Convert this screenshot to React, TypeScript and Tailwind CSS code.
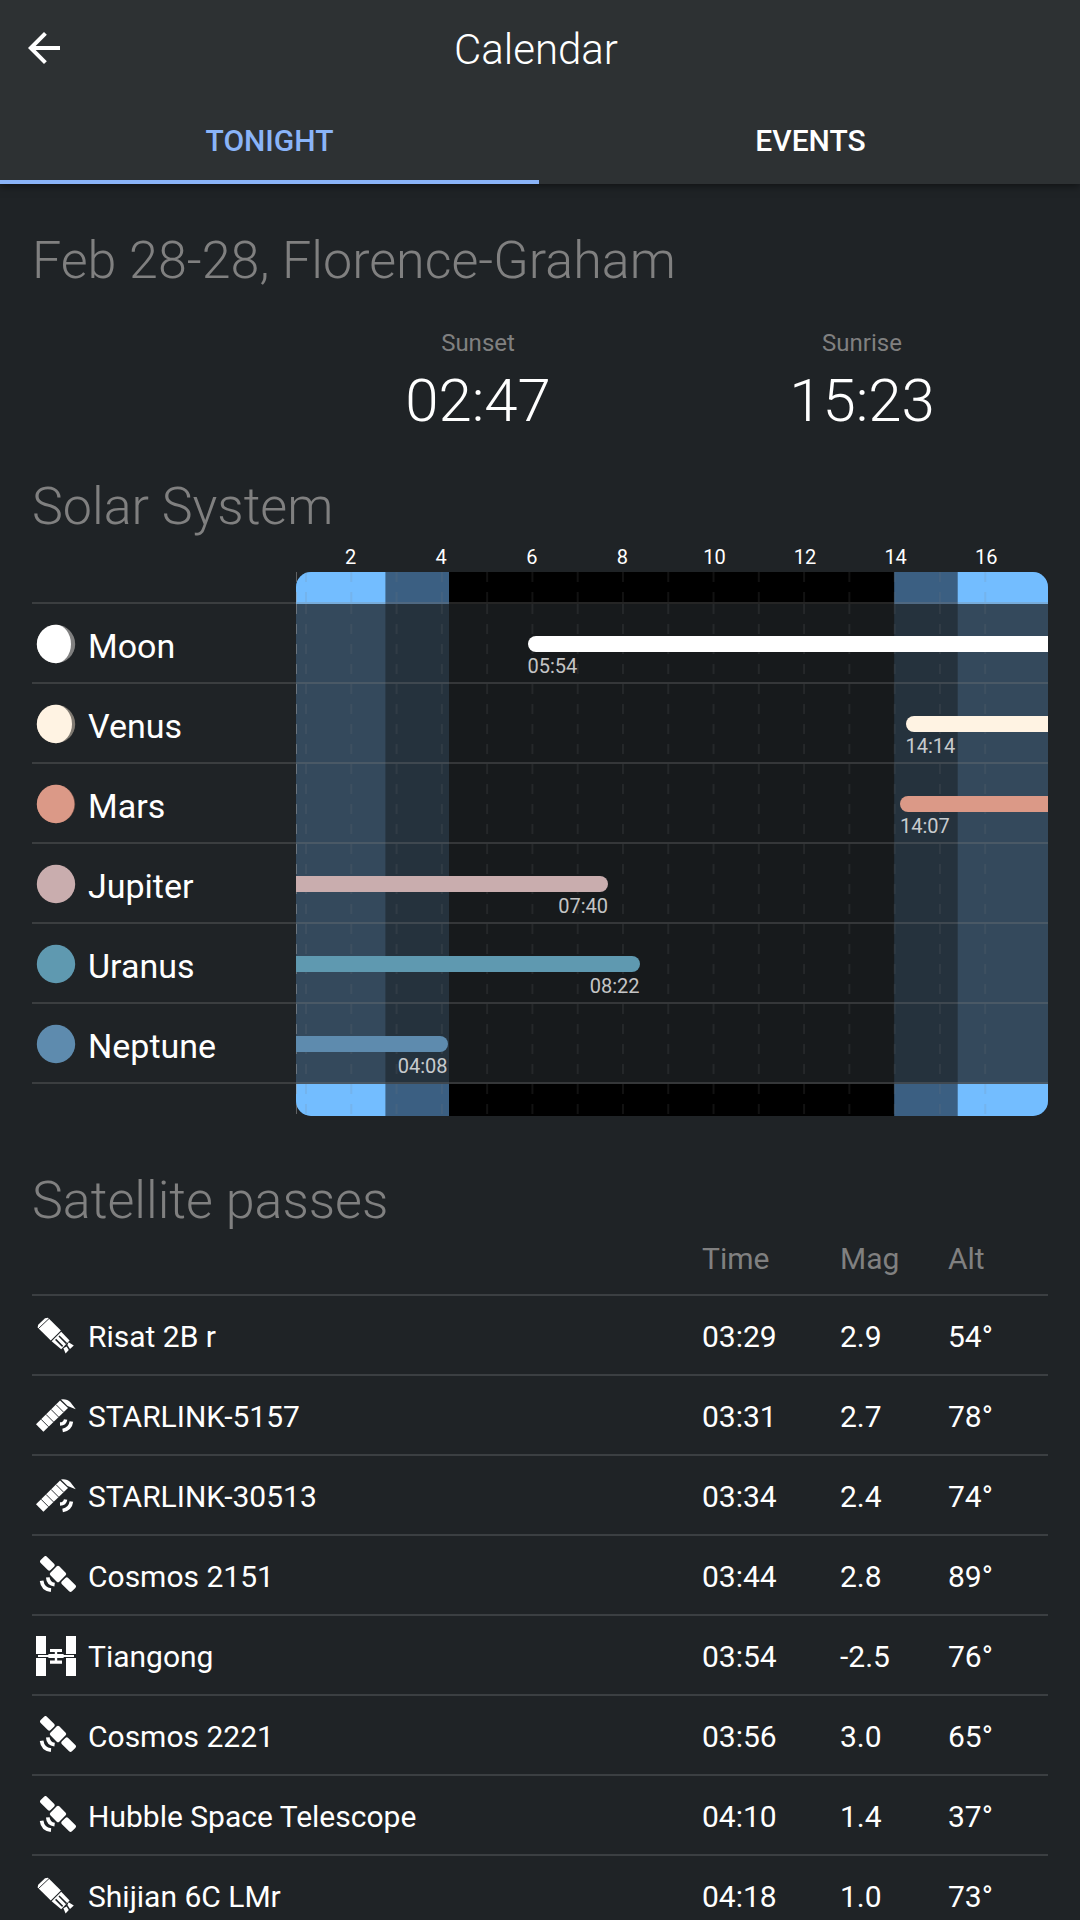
import type { ReactNode } from "react";

type Planet = {
  name: string;
  color: string;
  shade?: string;
  terminator?: number;
  start?: number;
  end?: number;
  label: string;
};

const CHART_W = 752;
const CHART_H = 544;

const hourX = (h: number) => 10 + (h - 1) * 45.28;

const planets: Planet[] = [
  { name: "Moon", color: "#ffffff", shade: "#808080", terminator: 15, start: 231.5, label: "05:54" },
  { name: "Venus", color: "#fff3e3", shade: "#807a72", terminator: 16, start: 609.5, label: "14:14" },
  { name: "Mars", color: "#db9987", shade: "#6e4d44", terminator: 18.4, start: 604, label: "14:07" },
  { name: "Jupiter", color: "#c9adae", end: 312, label: "07:40" },
  { name: "Uranus", color: "#5f99b0", end: 343.5, label: "08:22" },
  { name: "Neptune", color: "#5e8bae", end: 151.6, label: "04:08" },
];

type IconKind = "rocket" | "starlink" | "satellite" | "station";

const passes: { icon: IconKind; name: string; time: string; mag: string; alt: string }[] = [
  { icon: "rocket", name: "Risat 2B r", time: "03:29", mag: "2.9", alt: "54°" },
  { icon: "starlink", name: "STARLINK-5157", time: "03:31", mag: "2.7", alt: "78°" },
  { icon: "starlink", name: "STARLINK-30513", time: "03:34", mag: "2.4", alt: "74°" },
  { icon: "satellite", name: "Cosmos 2151", time: "03:44", mag: "2.8", alt: "89°" },
  { icon: "station", name: "Tiangong", time: "03:54", mag: "-2.5", alt: "76°" },
  { icon: "satellite", name: "Cosmos 2221", time: "03:56", mag: "3.0", alt: "65°" },
  { icon: "satellite", name: "Hubble Space Telescope", time: "04:10", mag: "1.4", alt: "37°" },
  { icon: "rocket", name: "Shijian 6C LMr", time: "04:18", mag: "1.0", alt: "73°" },
];

const icons: Record<IconKind, ReactNode> = {
  rocket: (
    <>
      <path d="M1.6 11.5 L2.2 8.8 L9 2.2 L12 1.8 L24.9 14.6 L14.8 24.6 Z" fill="#fff" />
      <path d="M2.4 12.6 L13 2.6" stroke="#1f2326" strokeWidth="0.9" />
      <path d="M15.6 25.2 L25.2 15.8 L33.6 24.6 L25.2 33.2 Z" fill="#fff" />
      <path d="M19.6 23.4 L26.6 30.4 M23 20 L30.6 27.6" stroke="#1f2326" strokeWidth="1.5" />
      <path d="M32.6 26.2 L37.8 29.4 L34 33 L31.4 29 Z M30.6 30.6 L32.8 34 L29.6 37.6 L27.4 32.2 Z" fill="#fff" />
    </>
  ),
  starlink: (
    <>
      <path d="M0 28.2 L24 4.4 L32 12 L7.4 35.8 Z" fill="#fff" />
      <path d="M5 23.2 L12.6 30.8 M10 18.4 L17.6 26 M15 13.4 L22.6 21 M20 8.6 L27.6 16.2" stroke="#1f2326" strokeWidth="0.9" />
      <path d="M25 3.4 Q31 2.6 34.6 6.6 L39.8 13.2 L31.6 10 Z" fill="#fff" />
      <path d="M29.6 23.4 Q29 27.8 24 28" stroke="#fff" strokeWidth="3.4" fill="none" />
      <path d="M35.4 25.4 Q34.4 33 26.6 34.4" stroke="#fff" strokeWidth="3.6" fill="none" />
    </>
  ),
  satellite: (
    <>
      <g transform="rotate(45 22 18)" fill="#fff">
        <rect x="-0.1" y="13.6" width="14.1" height="8.8" rx="2" />
        <rect x="15.7" y="11.7" width="12.6" height="12.6" rx="1.8" />
        <rect x="30" y="13.6" width="14.1" height="8.8" rx="2" />
      </g>
      <path d="M11.8 21.4 Q12.2 27.8 18.6 28.6" stroke="#fff" strokeWidth="3.7" fill="none" />
      <path d="M5.6 24.8 Q6.6 33.2 15 34.2" stroke="#fff" strokeWidth="3.7" fill="none" />
    </>
  ),
  station: (
    <g fill="#fff">
      <path d="M0 0H10V18H0Z M30 0H40V18H30Z M0 22H10V40H0Z M30 22H40V40H30Z" />
      <path d="M2 19H38V21H2Z M14 13H26V16H14Z M14 24.6H26V27.8H14Z M18.8 15H21.2V26H18.8Z" />
      <rect x="12" y="17.9" width="16" height="4.2" rx="1.4" />
    </g>
  ),
};

function Icon({ kind }: { kind: IconKind }) {
  return (
    <svg className="h-10 w-10 shrink-0" viewBox="0 0 40 40" fill="none">
      {icons[kind]}
    </svg>
  );
}

function Disc({ p }: { p: Planet }) {
  const r = 19.2;
  return (
    <svg className="h-10 w-10 shrink-0" viewBox="-20 -20 40 40">
      <circle r={r} fill={p.shade ?? p.color} />
      {p.terminator !== undefined && (
        <path
          d={`M0 ${-r} A${r} ${r} 0 0 0 0 ${r} A${p.terminator} ${r} 0 0 0 0 ${-r} Z`}
          fill={p.color}
        />
      )}
    </svg>
  );
}

function SkyBackground() {
  const segments = [0, 32, 112, 192, 272, 352, 432, 512];
  const hours = Array.from({ length: 16 }, (_, i) => i + 1);
  return (
    <svg
      className="absolute top-0 right-0 h-[544px] w-[752px]"
      viewBox={`0 0 ${CHART_W} ${CHART_H}`}
    >
      <defs>
        <clipPath id="sky">
          <rect width={CHART_W} height={CHART_H} rx="15" />
        </clipPath>
      </defs>
      <g clipPath="url(#sky)">
        <rect width={CHART_W} height={CHART_H} fill="#000" />
        <rect width="153" height={CHART_H} fill="#3b5f82" />
        <rect width="89.4" height={CHART_H} fill="#73bdff" />
        <rect x="598.2" width="153.8" height={CHART_H} fill="#3b5f82" />
        <rect x="661.7" width="90.3" height={CHART_H} fill="#73bdff" />
        <rect y="32" width={CHART_W} height="480" fill="#1f2326" fillOpacity="0.75" />
      </g>
      {segments.map((y) => (
        <g key={y}>
          {hours.map((h) => (
            <line
              key={h}
              x1={hourX(h)}
              x2={hourX(h)}
              y1={y}
              y2={y === 0 || y === 512 ? y + 30 : y + 78}
              stroke="#808080"
              strokeOpacity="0.14"
              strokeWidth="2"
              strokeDasharray="10 10"
            />
          ))}
          <line
            x1="0.5"
            x2="0.5"
            y1={y}
            y2={y === 0 || y === 512 ? y + 30 : y + 78}
            stroke="#a0a0a0"
            strokeOpacity="0.5"
            strokeWidth="1"
            strokeDasharray="10 10"
          />
        </g>
      ))}
    </svg>
  );
}

function PlanetRow({ p }: { p: Planet }) {
  const rising = p.start !== undefined;
  return (
    <div className="flex h-20 border-b-2 border-[#80808049]">
      <div className="flex w-[264px] items-center gap-3 pt-0.5 pl-1">
        <Disc p={p} />
        <span className="pt-[3px] text-[34px] leading-9 text-white">{p.name}</span>
      </div>
      {rising ? (
        <div className="flex-1 pt-8" style={{ paddingLeft: p.start }}>
          <div className="h-4 rounded-l-full" style={{ backgroundColor: p.color }} />
          <div className="mt-1 text-[20px] leading-5 text-white/75">{p.label}</div>
        </div>
      ) : (
        <div className="pt-8" style={{ width: p.end }}>
          <div className="h-4 rounded-r-full" style={{ backgroundColor: p.color }} />
          <div className="mt-1 text-right text-[20px] leading-5 text-white/75">{p.label}</div>
        </div>
      )}
    </div>
  );
}

export default function App() {
  return (
    <div className="h-[1920px] w-[1080px] overflow-hidden bg-[#1f2326] font-['Roboto',sans-serif] text-white">
      <header className="relative h-[184px] bg-[#2d3133] shadow-[0_2px_8px_rgba(0,0,0,0.5)]">
        <div className="flex h-24 items-center pr-[76px] pl-5">
          <svg className="h-12 w-12" viewBox="0 0 24 24" fill="#fff">
            <path d="M20 11H7.83l5.59-5.59L12 4l-8 8 8 8 1.41-1.41L7.83 13H20v-2z" />
          </svg>
          <h1 className="flex-1 pt-1 text-center text-[42px] leading-[48px] font-light">Calendar</h1>
        </div>
        <nav className="grid h-[88px] grid-cols-[539px_541px] text-center text-[30px] font-medium">
          <div className="flex items-center justify-center border-b-4 border-[#8ab4f8] pt-1 text-[#8ab4f8]">
            TONIGHT
          </div>
          <div className="flex items-center justify-center pl-0.5">EVENTS</div>
        </nav>
      </header>

      <main className="px-8">
        <h2 className="mt-[47px] text-[52px] leading-[60px] font-light text-[#808080]">
          Feb 28-28, Florence-Graham
        </h2>
        <div className="mt-[38px] ml-[254px] grid w-[768px] grid-cols-2 text-center">
          <div>
            <div className="text-[24px] leading-7 text-[#808080]">Sunset</div>
            <div className="mt-[8px] text-[60px] leading-[72px] font-light">02:47</div>
          </div>
          <div>
            <div className="text-[24px] leading-7 text-[#808080]">Sunrise</div>
            <div className="mt-[8px] text-[60px] leading-[72px] font-light">15:23</div>
          </div>
        </div>

        <h2 className="mt-10 text-[52px] leading-[60px] font-light text-[#808080]">Solar System</h2>
        <div className="relative ml-[264px] h-[35px] text-[20px] leading-6">
          {[2, 4, 6, 8, 10, 12, 14, 16].map((h) => (
            <span
              key={h}
              className="absolute top-[8px] -translate-x-1/2"
              style={{ left: hourX(h) + (h >= 10 ? 1 : -0.6) }}
            >
              {h}
            </span>
          ))}
        </div>
        <section className="relative h-[544px]">
          <SkyBackground />
          <div className="relative">
            <div className="h-8 border-b-2 border-[#80808049]" />
            {planets.map((p) => (
              <PlanetRow key={p.name} p={p} />
            ))}
          </div>
        </section>

        <h2 className="mt-[55px] text-[52px] leading-[60px] font-light text-[#808080]">
          Satellite passes
        </h2>
        <div className="grid h-[65px] grid-cols-[670px_138px_108px_1fr] border-b-2 border-[#3b3f42] pt-[10px] text-[30px] leading-9 text-[#808080]">
          <span />
          <span>Time</span>
          <span>Mag</span>
          <span>Alt</span>
        </div>
        {passes.map((s) => (
          <div
            key={s.name}
            className="grid h-20 grid-cols-[670px_138px_108px_1fr] items-center border-b-2 border-[#3b3f42] pt-0.5 text-[30px] leading-9"
          >
            <div className="flex items-center gap-3 pl-1">
              <Icon kind={s.icon} />
              <span className="pt-px">{s.name}</span>
            </div>
            <span className="pt-px">{s.time}</span>
            <span className="pt-px">{s.mag}</span>
            <span className="pt-px">{s.alt}</span>
          </div>
        ))}
      </main>
    </div>
  );
}
